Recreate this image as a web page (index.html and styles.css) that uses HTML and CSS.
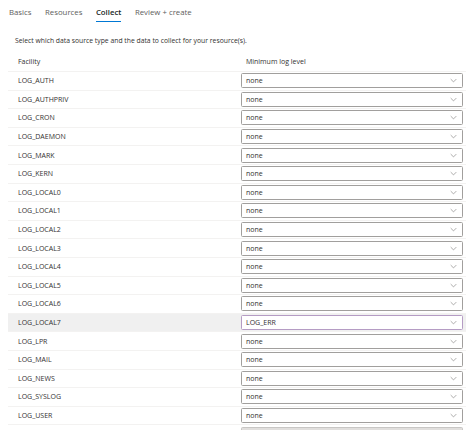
FILE: index.html
```html
<!DOCTYPE html>
<html>
<head>
<meta charset="utf-8">
<link rel="stylesheet" href="styles.css">
</head>
<body>
<div class="page">
  <nav class="tabs">
    <span class="tab">Basics</span>
    <span class="tab">Resources</span>
    <span class="tab active">Collect</span>
    <span class="tab">Review + create</span>
  </nav>
  <p class="intro">Select which data source type and the data to collect for your resource(s).</p>
  <div class="table">
    <div class="row head"><span class="fac">Facility</span><span class="lvl">Minimum log level</span></div>
    <div class="row"><span class="fac">LOG_AUTH</span><div class="sel"><span>none</span><svg viewBox="0 0 10 6"><path d="M1 1l4 4 4-4"/></svg></div></div>
    <div class="row"><span class="fac">LOG_AUTHPRIV</span><div class="sel"><span>none</span><svg viewBox="0 0 10 6"><path d="M1 1l4 4 4-4"/></svg></div></div>
    <div class="row"><span class="fac">LOG_CRON</span><div class="sel"><span>none</span><svg viewBox="0 0 10 6"><path d="M1 1l4 4 4-4"/></svg></div></div>
    <div class="row"><span class="fac">LOG_DAEMON</span><div class="sel"><span>none</span><svg viewBox="0 0 10 6"><path d="M1 1l4 4 4-4"/></svg></div></div>
    <div class="row"><span class="fac">LOG_MARK</span><div class="sel"><span>none</span><svg viewBox="0 0 10 6"><path d="M1 1l4 4 4-4"/></svg></div></div>
    <div class="row"><span class="fac">LOG_KERN</span><div class="sel"><span>none</span><svg viewBox="0 0 10 6"><path d="M1 1l4 4 4-4"/></svg></div></div>
    <div class="row"><span class="fac">LOG_LOCAL0</span><div class="sel"><span>none</span><svg viewBox="0 0 10 6"><path d="M1 1l4 4 4-4"/></svg></div></div>
    <div class="row"><span class="fac">LOG_LOCAL1</span><div class="sel"><span>none</span><svg viewBox="0 0 10 6"><path d="M1 1l4 4 4-4"/></svg></div></div>
    <div class="row"><span class="fac">LOG_LOCAL2</span><div class="sel"><span>none</span><svg viewBox="0 0 10 6"><path d="M1 1l4 4 4-4"/></svg></div></div>
    <div class="row"><span class="fac">LOG_LOCAL3</span><div class="sel"><span>none</span><svg viewBox="0 0 10 6"><path d="M1 1l4 4 4-4"/></svg></div></div>
    <div class="row"><span class="fac">LOG_LOCAL4</span><div class="sel"><span>none</span><svg viewBox="0 0 10 6"><path d="M1 1l4 4 4-4"/></svg></div></div>
    <div class="row"><span class="fac">LOG_LOCAL5</span><div class="sel"><span>none</span><svg viewBox="0 0 10 6"><path d="M1 1l4 4 4-4"/></svg></div></div>
    <div class="row"><span class="fac">LOG_LOCAL6</span><div class="sel"><span>none</span><svg viewBox="0 0 10 6"><path d="M1 1l4 4 4-4"/></svg></div></div>
    <div class="row hover"><span class="fac">LOG_LOCAL7</span><div class="sel focus"><span>LOG_ERR</span><svg viewBox="0 0 10 6"><path d="M1 1l4 4 4-4"/></svg></div></div>
    <div class="row"><span class="fac">LOG_LPR</span><div class="sel"><span>none</span><svg viewBox="0 0 10 6"><path d="M1 1l4 4 4-4"/></svg></div></div>
    <div class="row"><span class="fac">LOG_MAIL</span><div class="sel"><span>none</span><svg viewBox="0 0 10 6"><path d="M1 1l4 4 4-4"/></svg></div></div>
    <div class="row"><span class="fac">LOG_NEWS</span><div class="sel"><span>none</span><svg viewBox="0 0 10 6"><path d="M1 1l4 4 4-4"/></svg></div></div>
    <div class="row"><span class="fac">LOG_SYSLOG</span><div class="sel"><span>none</span><svg viewBox="0 0 10 6"><path d="M1 1l4 4 4-4"/></svg></div></div>
    <div class="row"><span class="fac">LOG_USER</span><div class="sel"><span>none</span><svg viewBox="0 0 10 6"><path d="M1 1l4 4 4-4"/></svg></div></div>
    <div class="row"><span class="fac"></span><div class="sel disabled"></div></div>
  </div>
</div>
</body>
</html>
```
FILE: styles.css
```css
html, body {
  margin: 0;
  padding: 0;
  background: #ffffff;
}
body {
  font-family: "Open Sans", "Noto Sans", sans-serif;
  font-size: 7px;
  color: #323130;
  overflow: hidden;
  height: 430px;
}
.page {
  padding: 0 8px;
}
.tabs {
  display: flex;
  gap: 13.5px;
  padding: 6px 0 0 1px;
  height: 17px;
}
.tab {
  font-size: 7.8px;
  color: #605e5c;
  line-height: 12px;
  height: 15px;
}
.tab.active {
  color: #201f1e;
  font-weight: 600;
  border-bottom: 1.5px solid #0078d4;
}
.intro {
  margin: 13px 0 0 7px;
  line-height: 10px;
  font-size: 6.8px;
}
.table {
  margin-top: 6px;
}
.row {
  display: flex;
  align-items: center;
  height: 18.6px;
  border-bottom: 1px solid #f3f2f1;
  box-sizing: border-box;
}
.row.head {
  height: 20px;
}
.row.hover {
  background: #f0f0f0;
}
.fac {
  width: 233px;
  padding-left: 10px;
  box-sizing: border-box;
}
.lvl {
  padding-left: 5px;
}
.sel {
  width: 222px;
  height: 15px;
  box-sizing: border-box;
  border: 1px solid #a19f9d;
  border-radius: 1.5px;
  background: #fff;
  display: flex;
  align-items: center;
  justify-content: space-between;
  padding: 0 5px 0 4px;
}
.sel.focus {
  border-color: #b59cc4;
}
.sel.disabled {
  background: #e1dfdd;
  border-color: #c8c6c4;
}
.sel svg {
  width: 7px;
  height: 5px;
  fill: none;
  stroke: #8a8886;
  stroke-width: 1;
}
```
